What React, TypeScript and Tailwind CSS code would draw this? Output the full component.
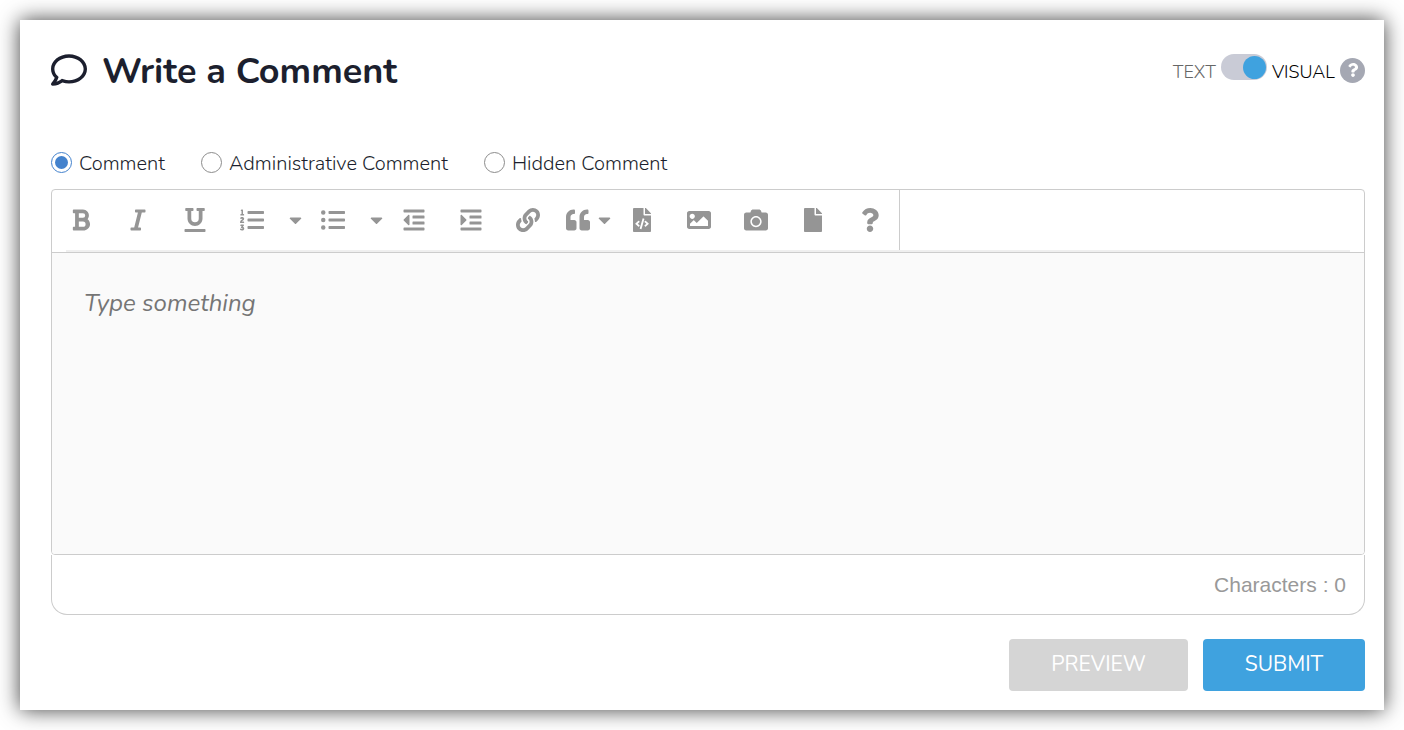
import React, { useState } from "react";
import {
  FaBold,
  FaCamera,
  FaCaretDown,
  FaFile,
  FaFileCode,
  FaImage,
  FaIndent,
  FaItalic,
  FaLink,
  FaListOl,
  FaListUl,
  FaOutdent,
  FaQuestion,
  FaQuoteLeft,
  FaRegComment,
  FaUnderline,
} from "react-icons/fa";

type ToolProps = {
  label: string;
  icon: React.ReactNode;
};

const commentTypes = ["Comment", "Administrative Comment", "Hidden Comment"];

function Tool({ label, icon }: ToolProps) {
  return (
    <button
      type="button"
      aria-label={label}
      className="flex h-full w-[57px] items-center justify-center text-2xl"
    >
      {icon}
    </button>
  );
}

function Caret({ label }: { label: string }) {
  return (
    <button
      type="button"
      aria-label={label}
      className="flex h-full w-6 items-center justify-end pr-0.5"
    >
      <FaCaretDown className="h-5 w-[13px]" />
    </button>
  );
}

function Header() {
  const [visual, setVisual] = useState(true);

  return (
    <header className="flex items-center justify-between">
      <h1 className="flex items-center gap-[15px] text-4xl font-bold">
        <FaRegComment className="mb-1" />
        Write a Comment
      </h1>
      <div className="flex items-center gap-[5px] text-lg font-light">
        <label htmlFor="mode" className="text-[#666666]">
          TEXT
        </label>
        <input
          id="mode"
          type="checkbox"
          role="switch"
          checked={visual}
          onChange={(e) => setVisual(e.target.checked)}
          className="mb-2.5 flex h-[26px] w-[46px] appearance-none items-center rounded-full bg-[#c9cbd6] px-px before:size-[23px] before:rounded-full before:bg-[#3fa2df] checked:justify-end"
        />
        <label htmlFor="mode" className="text-black">
          VISUAL
        </label>
        <button
          type="button"
          aria-label="Help"
          className="mb-1 flex size-[25px] items-center justify-center rounded-full bg-[#a5a8b3] text-sm text-white"
        >
          <FaQuestion />
        </button>
      </div>
    </header>
  );
}

function Toolbar() {
  return (
    <div className="flex h-[60px] text-[#959595]">
      <div className="flex border-r border-[#cccccc] pr-px">
        <Tool label="Bold" icon={<FaBold />} />
        <Tool label="Italic" icon={<FaItalic />} />
        <Tool label="Underline" icon={<FaUnderline />} />
        <Tool label="Ordered list" icon={<FaListOl />} />
        <Caret label="Ordered list styles" />
        <Tool label="Unordered list" icon={<FaListUl />} />
        <Caret label="Unordered list styles" />
        <Tool label="Decrease indent" icon={<FaOutdent />} />
        <Tool label="Increase indent" icon={<FaIndent />} />
        <Tool label="Insert link" icon={<FaLink />} />
        <Tool
          label="Quote"
          icon={
            <span className="flex items-center gap-2 pl-2">
              <FaQuoteLeft />
              <FaCaretDown className="h-5 w-[13px]" />
            </span>
          }
        />
        <Tool label="Code block" icon={<FaFileCode />} />
        <Tool label="Insert image" icon={<FaImage />} />
        <Tool label="Take photo" icon={<FaCamera />} />
        <Tool label="Insert file" icon={<FaFile />} />
        <Tool label="Help" icon={<FaQuestion />} />
      </div>
    </div>
  );
}

function App() {
  const [type, setType] = useState(commentTypes[0]);
  const [text, setText] = useState("");

  return (
    <div className="min-h-screen bg-white p-5 font-['Nunito','Lato',sans-serif] text-[#1c1f2e]">
      <form
        onSubmit={(e) => e.preventDefault()}
        className="bg-white pt-8 pr-[19px] pb-[19px] pl-[31px] shadow-[0_0_20px_rgba(0,0,0,0.75)]"
      >
        <Header />
        <fieldset className="mt-[58px] flex gap-9 text-xl font-light">
          {commentTypes.map((name) => (
            <label key={name} className="flex items-center gap-[7px]">
              <input
                type="radio"
                name="type"
                checked={type === name}
                onChange={() => setType(name)}
                className="mb-1 flex size-[21px] appearance-none items-center justify-center rounded-full border border-[#8c8c8c] checked:border-[#4382cd] checked:before:size-[13px] checked:before:rounded-full checked:before:bg-[#4382cd]"
              />
              {name}
            </label>
          ))}
        </fieldset>

        <div className="mt-[11px] overflow-hidden rounded border border-[#cccccc]">
          <Toolbar />
          <div className="mx-[14px] h-0.5 bg-[#efefef]" />
          <textarea
            aria-label="Comment text"
            placeholder="Type something"
            value={text}
            onChange={(e) => setText(e.target.value)}
            className="block h-[302px] w-full resize-none border-t border-[#cccccc] bg-[#fafafa] px-8 py-[34px] text-2xl placeholder:text-[#757575] placeholder:italic"
          />
        </div>
        <div className="flex h-[60px] items-center justify-end rounded-b-2xl border border-t-0 border-[#cccccc] px-[18px] font-['Liberation_Sans',sans-serif] text-[21px] text-[#999999]">
          Characters : {text.length}
        </div>

        <div className="mt-6 flex justify-end gap-[15px] text-[21px] text-white">
          <button type="button" className="h-[52px] w-[179px] rounded bg-[#d5d5d5]">
            PREVIEW
          </button>
          <button type="submit" className="h-[52px] w-[162px] rounded bg-[#3fa2df]">
            SUBMIT
          </button>
        </div>
      </form>
    </div>
  );
}

export default App;
